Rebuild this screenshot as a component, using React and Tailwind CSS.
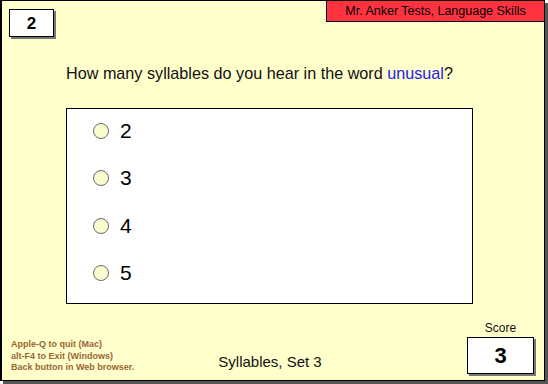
export default function App() {
  const options = ["2", "3", "4", "5"];
  return (
    <div className="w-[548px] h-[384px] bg-white font-['Liberation_Sans',Arial,sans-serif]">
      <div className="w-[545px] h-[381px] border border-l-2 border-black bg-[#ffffcc] shadow-[3px_3px_0_#555] flex flex-col">
        {/* top row */}
        <div className="flex justify-between items-start h-[36px]">
          <div className="ml-[7px] mt-[8px] w-[45px] h-[28px] border border-black bg-white shadow-[2px_2px_0_#777] flex items-center justify-center text-[17px] font-bold text-black leading-none">
            2
          </div>
          <div className="w-[218px] h-[21px] border-l border-b border-black bg-[#ff3340] flex items-center justify-center text-[12.5px] text-black leading-none">
            Mr. Anker Tests, Language Skills
          </div>
        </div>

        {/* question */}
        <div className="mt-[27px] ml-[64px] text-[16.2px] leading-[18px] text-[#111]">
          How many syllables do you hear in the word <span className="text-[#2222ee]">unusual</span>?
        </div>

        {/* answers */}
        <div className="mt-[26px] ml-[64px] w-[407px] h-[196px] border border-black bg-white flex flex-col pt-[12px] gap-[27.33px]">
          {options.map((o) => (
            <div key={o} className="flex items-center h-[20px] pl-[26px] gap-[11px]">
              <div className="w-[16px] h-[16px] rounded-full border border-[#6b6b6b] bg-[#fbfbd0]" />
              <span className="text-[21px] leading-[20px] text-black">{o}</span>
            </div>
          ))}
        </div>

        {/* bottom row */}
        <div className="mt-auto grid grid-cols-[1fr_auto_1fr] items-end">
          <div className="ml-[9px] mb-[6px] text-[9px] leading-[11.7px] font-bold text-[#996633]">
            <div>Apple-Q to quit (Mac)</div>
            <div>alt-F4 to Exit (Windows)</div>
            <div>Back button in Web browser.</div>
          </div>
          <div className="mb-[10px] mr-[6px] text-[15px] leading-[17px] text-[#111]">
            Syllables, Set 3
          </div>
          <div className="justify-self-end mr-[10px] mb-[6px] flex flex-col items-center">
            <div className="text-[12px] leading-[14px] text-[#111]">Score</div>
            <div className="mt-[2px] w-[67px] h-[37px] border border-black bg-white shadow-[2px_2px_0_#777] flex items-center justify-center text-[22px] font-bold text-black leading-none">
              3
            </div>
          </div>
        </div>
      </div>
    </div>
  );
}
